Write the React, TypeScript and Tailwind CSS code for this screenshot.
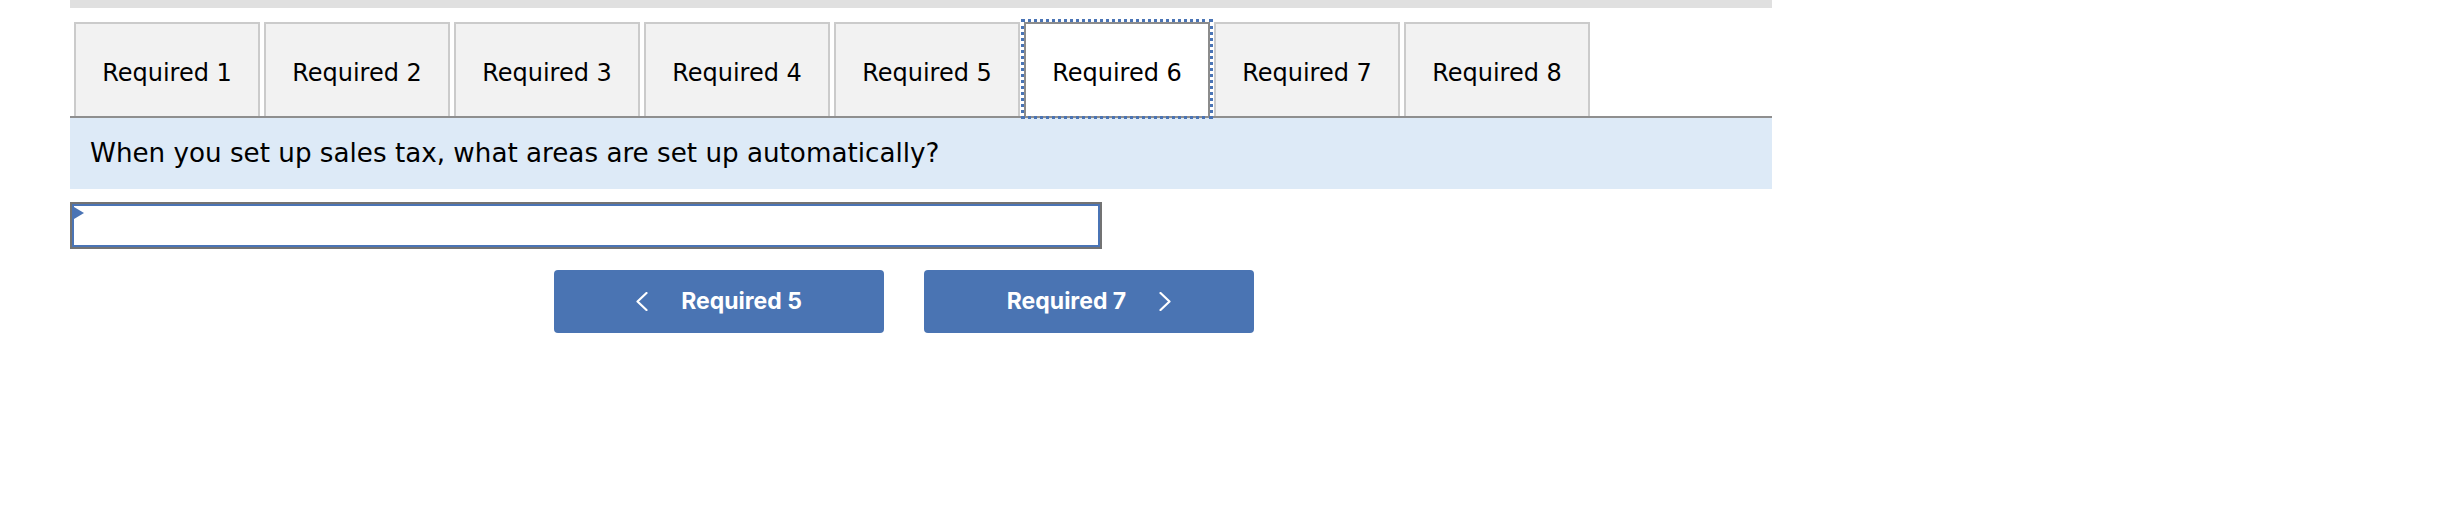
import React from "react";

const tabs = ["Required 1", "Required 2", "Required 3", "Required 4", "Required 5", "Required 6", "Required 7", "Required 8"];

function Chevron({ dir }: { dir: "left" | "right" }) {
  return (
    <svg width="12" height="19" viewBox="0 0 12 19" fill="none">
      <polyline
        points={dir === "left" ? "10.5,1 1.5,9.5 10.5,18" : "1.5,1 10.5,9.5 1.5,18"}
        stroke="#ffffff"
        strokeWidth="2.2"
        strokeLinecap="round"
        strokeLinejoin="round"
      />
    </svg>
  );
}

export default function App() {
  const active = 5;
  return (
    <div className="min-h-[528px] w-[2444px] bg-white" style={{ fontFamily: '"DejaVu Sans", Verdana, sans-serif' }}>
      <div className="ml-[70px] w-[1702px]">
        <div className="h-[8px] bg-[#e0e0e0]" />

        {/* tab strip */}
        <div className="mt-[14px] flex items-start gap-[4px] border-b-2 border-[#8f8f8f] pl-[4px]">
          {tabs.map((t, i) => (
            <button
              key={t}
              className={
                i === active
                  ? "flex h-[94px] w-[186px] items-center justify-center border-2 border-b-0 border-[#8c8c8c] bg-white pt-[5px] text-[24px] text-black outline-[3px] outline-dotted outline-[#4a74b5]"
                  : "flex h-[94px] w-[186px] items-center justify-center border-2 border-b-0 border-[#cbcbcb] bg-[#f2f2f2] pt-[5px] text-[24px] text-black"
              }
            >
              {t}
            </button>
          ))}
        </div>

        {/* question */}
        <div className="flex h-[71px] items-center bg-[#ddeaf7] pl-[20px] text-[26.2px] text-black">
          When you set up sales tax, what areas are set up automatically?
        </div>

        {/* answer box */}
        <div className="relative mt-[13px] h-[47px] w-[1032px] border-2 border-[#737373] bg-white shadow-[inset_0_0_0_2px_#4a74b5]">
          <div className="absolute left-[2px] top-[3px] h-0 w-0 border-y-[6px] border-l-[10px] border-y-transparent border-l-[#4a74b5]" />
        </div>

        {/* nav buttons */}
        <div className="mt-[21px] flex gap-[40px] pl-[484px]" style={{ fontFamily: "Inter, sans-serif" }}>
          <button className="flex h-[63px] w-[330px] items-center justify-center gap-[33px] rounded-[4px] bg-[#4a74b3] text-[23px] font-bold text-white">
            <Chevron dir="left" />
            <span>Required 5</span>
          </button>
          <button className="flex h-[63px] w-[330px] items-center justify-center gap-[33px] rounded-[4px] bg-[#4a74b3] text-[23px] font-bold text-white">
            <span>Required 7</span>
            <Chevron dir="right" />
          </button>
        </div>
      </div>
    </div>
  );
}
